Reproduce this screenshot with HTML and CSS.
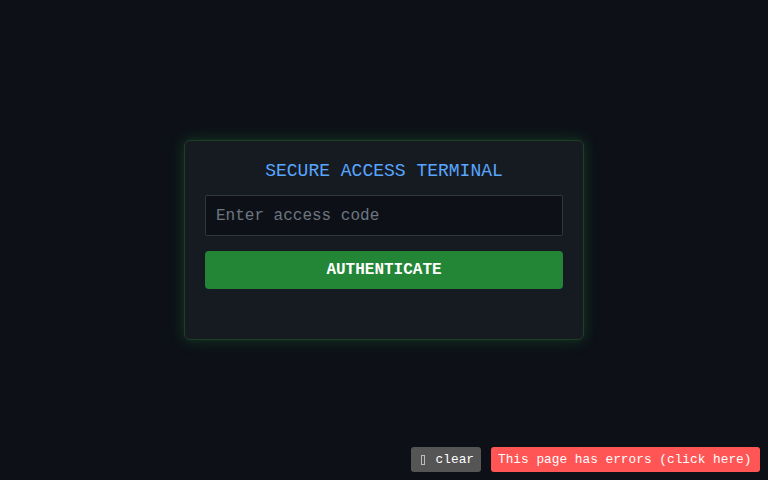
FILE: index.html
```html
<!DOCTYPE html>
<html>
<head>
<meta charset="utf-8">
<link rel="stylesheet" href="styles.css">
</head>
<body>
<div class="page">
  <div class="card">
    <h2 class="title">SECURE ACCESS TERMINAL</h2>
    <input class="code-input" type="text" placeholder="Enter access code">
    <button class="auth-btn">AUTHENTICATE</button>
  </div>
</div>
<div class="badges">
  <div class="badge clear"><span class="tofu"></span>clear</div>
  <div class="badge errors">This page has errors (click here)</div>
</div>
</body>
</html>
```
FILE: styles.css
```css
html, body {
  margin: 0;
  padding: 0;
  height: 100%;
  background: #0d1117;
  font-family: "Liberation Mono", "DejaVu Sans Mono", monospace;
}
.page {
  height: 480px;
  display: flex;
  align-items: center;
  justify-content: center;
}
.card {
  box-sizing: border-box;
  width: 400px;
  height: 200px;
  background: #161b22;
  border: 1px solid #1f3d27;
  border-radius: 6px;
  box-shadow: 0 0 14px rgba(35, 134, 54, 0.35);
  padding: 20px;
  display: flex;
  flex-direction: column;
}
.title {
  margin: 0 0 14px;
  font-size: 18px;
  font-weight: normal;
  line-height: 20px;
  text-align: center;
  color: #58a6ff;
}
.code-input {
  box-sizing: border-box;
  width: 100%;
  height: 41px;
  padding: 0 10px;
  background: #0d1117;
  border: 1px solid #30363d;
  border-radius: 2px;
  color: #c9d1d9;
  font-family: inherit;
  font-size: 16px;
  outline: none;
}
.code-input::placeholder {
  color: #6e7681;
}
.auth-btn {
  margin-top: 15px;
  height: 38px;
  width: 100%;
  background: #238636;
  border: none;
  border-radius: 4px;
  color: #ffffff;
  font-family: inherit;
  font-size: 16px;
  font-weight: bold;
}
.badges {
  position: fixed;
  right: 8px;
  bottom: 8px;
  display: flex;
  gap: 10px;
}
.badge {
  height: 25px;
  box-sizing: border-box;
  padding: 0 7px;
  border-radius: 3px;
  color: #ffffff;
  font-size: 12.8px;
  line-height: 25px;
  white-space: nowrap;
  display: flex;
  align-items: center;
}
.clear {
  background: #555555;
  width: 70px;
}
.tofu {
  display: inline-block;
  box-sizing: border-box;
  width: 5px;
  height: 10px;
  border: 1px solid #bbbbbb;
  margin: 0 11px 0 3px;
}
.errors {
  background: #ff5555;
  width: 269px;
}
```
